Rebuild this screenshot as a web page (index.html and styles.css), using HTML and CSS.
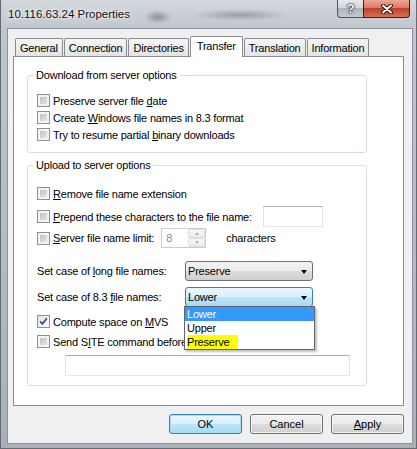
FILE: index.html
```html
<!DOCTYPE html>
<html lang="en">
<head>
    <meta charset="UTF-8">
    <meta name="viewport" content="width=device-width, initial-scale=1.0">
    <title>10.116.63.24 Properties</title>

    <link rel="stylesheet" href="styles.css">

</head>
<body>

    <div class="window">
        <div class="titlebar">
            <span class="caption">10.116.63.24 Properties</span>
            <div class="caption-buttons">
                <div class="cap-btn help"><span>?</span></div>
                <div class="cap-btn close">
                    <svg width="12" height="10" viewBox="0 0 12 10">
                        <path d="M2 1.5 L10 8.5 M10 1.5 L2 8.5" stroke="#3b1209" stroke-width="4" stroke-linecap="round"/>
                        <path d="M2 1.5 L10 8.5 M10 1.5 L2 8.5" stroke="#fff" stroke-width="2" stroke-linecap="round"/>
                    </svg>
                </div>
            </div>
        </div>

        <div class="client">
            <div class="tabs">
                <div class="tab">General</div>
                <div class="tab">Connection</div>
                <div class="tab">Directories</div>
                <div class="tab active">Transfer</div>
                <div class="tab">Translation</div>
                <div class="tab">Information</div>
            </div>

            <div class="panel">
                <fieldset class="group">
                    <legend>Download from server options</legend>
                    <label class="row"><span class="box"></span><span>Preserve server file <u>d</u>ate</span></label>
                    <label class="row"><span class="box"></span><span>Create <u>W</u>indows file names in 8.3 format</span></label>
                    <label class="row"><span class="box"></span><span>Try to resume partial <u>b</u>inary downloads</span></label>
                </fieldset>

                <fieldset class="group upload">
                    <legend>Upload to server options</legend>
                    <label class="row"><span class="box"></span><span><u>R</u>emove file name extension</span></label>
                    <div class="row prepend-row">
                        <label class="row"><span class="box"></span><span><u>P</u>repend these characters to the file name:</span></label>
                        <span class="textbox prefix-box"></span>
                    </div>
                    <div class="row limit-row">
                        <label class="row"><span class="box"></span><span><u>S</u>erver file name limit:</span></label>
                        <div class="spin">
                            <span class="spin-value">8</span>
                            <div class="spin-arrows">
                                <span class="spin-btn"><i class="tri up"></i></span>
                                <span class="spin-btn"><i class="tri down"></i></span>
                            </div>
                        </div>
                        <span class="units">characters</span>
                    </div>
                    <div class="row case-row long-case">
                        <span class="case-label">Set case of <u>l</u>ong file names:</span>
                        <div class="combo"><span>Preserve</span><i class="arrow"></i></div>
                    </div>
                    <div class="row case-row short-case">
                        <span class="case-label">Set case of 8.3 <u>f</u>ile names:</span>
                        <div class="combo open"><span>Lower</span><i class="arrow"></i>
                            <ul class="combo-list">
                                <li class="selected">Lower</li>
                                <li>Upper</li>
                                <li><span class="mark">Preserve</span></li>
                            </ul>
                        </div>
                    </div>
                    <label class="row compute-row">
                        <span class="box checked">
                            <svg width="11" height="11" viewBox="0 0 11 11">
                                <path d="M2.2 5.4 L4.4 7.8 L8.9 2.3" fill="none" stroke="#3a4f86" stroke-width="1.8"/>
                            </svg>
                        </span><span>Compute space on <u>M</u>VS</span>
                    </label>
                    <label class="row site-row"><span class="box"></span><span>Send S<u>I</u>TE command before</span></label>
                    <span class="textbox site-box"></span>
                </fieldset>
            </div>

            <div class="buttons">
                <button class="btn default">OK</button>
                <button class="btn">Cancel</button>
                <button class="btn"><u>A</u>pply</button>
            </div>
        </div>
    </div>

</body>
</html>
```

FILE: styles.css
```css
* {
box-sizing: border-box;
}

body {
margin: 0;
font-family: "Liberation Sans", Arial, sans-serif;
font-size: 11px;
letter-spacing: -0.2px;
color: #000;
}

/* aero frame */
.window {
width: 417px;
height: 449px;
display: flex;
flex-direction: column;
padding: 0 4px 5px 7px;
overflow: hidden;
background:
  radial-gradient(ellipse 14px 7px at 158px 17px, rgba(70, 74, 80, 0.45), transparent),
  radial-gradient(ellipse 50px 6px at 240px 15px, rgba(70, 74, 80, 0.35), transparent),
  linear-gradient(#d3d8dd, #bfc6cc 30px, #a9b0b7);
box-shadow: inset 1px 0 0 #656b72, inset -1px 0 0 #656b72, inset 0 -1px 0 #656b72;
}

.titlebar {
height: 28px;
display: flex;
align-items: flex-start;
padding-left: 1px;
}

.caption {
align-self: center;
font-size: 11.5px;
letter-spacing: 0;
color: #111;
text-shadow: 0 0 6px #fff, 0 0 3px #fff;
}

.caption-buttons {
display: flex;
margin-left: auto;
margin-right: 3px;
}

.cap-btn {
height: 18px;
display: flex;
align-items: center;
justify-content: center;
}

.help {
width: 26px;
border: 1px solid #4b5560;
border-top: 0;
border-right: 0;
border-radius: 0 0 0 4px;
background: linear-gradient(#e6eaee 0, #d0d6dc 45%, #aab3bc 50%, #c3cad1 100%);
}

.help span {
font-weight: bold;
font-size: 13px;
color: #f4f6f8;
text-shadow: 0 0 1px #27313b, 0 0 2px #27313b, 0 0 2px #27313b;
}

.close {
width: 47px;
border: 1px solid #4a1d14;
border-top: 0;
border-radius: 0 0 4px 0;
background: linear-gradient(#eaa898 0, #d97a63 45%, #c0412a 50%, #d4705a 100%);
}

/* client area */
.client {
flex: 1;
display: flex;
flex-direction: column;
background: #f0f0f0;
border: 1px solid #8a939b;
padding: 7px 8px 9px 5px;
}

.tabs {
display: flex;
align-items: flex-end;
height: 20px;
padding-left: 2px;
position: relative;
z-index: 1;
}

.tab {
height: 18px;
padding: 1px 4px 0;
line-height: 16px;
margin-right: 1px;
border: 1px solid #898c95;
border-bottom: 0;
border-radius: 2px 2px 0 0;
background: linear-gradient(#f5f5f5, #e4e4e4);
}

.tab.active {
height: 21px;
margin-bottom: -1px;
padding: 0 6px;
line-height: 18px;
background: #fff;
}

.panel {
flex: 1;
background: #fff;
border: 1px solid #898c95;
padding-left: 13px;
}

/* group boxes */
.group {
width: 340px;
min-width: 0;
margin: 11px 0 0;
padding: 10px 8px 9px 9px;
border: 1px solid #d5dfe5;
border-radius: 3px;
}

.group legend {
padding: 0 3px;
margin-left: -4px;
line-height: 14px;
}

.group.upload {
margin-top: 5px;
padding-top: 13px;
}

.row {
display: flex;
align-items: center;
height: 17px;
gap: 3px;
white-space: nowrap;
}

.box {
width: 13px;
height: 13px;
flex: none;
border: 1px solid #8e8f8f;
background: linear-gradient(135deg, #b3b8be, #eeeeee);
box-shadow: inset 0 0 0 2px #f4f4f4;
}

.box.checked {
background: linear-gradient(135deg, #e2e6ea, #fbfbfb);
box-shadow: none;
}

.box svg {
display: block;
}

.prepend-row {
height: 21px;
margin-top: 4px;
}

.limit-row {
height: 20px;
margin-top: 1px;
}

.textbox {
display: block;
height: 21px;
background: #fff;
border: 1px solid;
border-color: #abadb3 #dbdfe6 #e3e9ef #e2e3ea;
}

.prefix-box {
width: 60px;
margin-left: 8px;
}

.site-box {
width: 285px;
margin: 5px 0 0 28px;
}

.spin {
display: flex;
width: 45px;
height: 20px;
margin-left: 4px;
border: 1px solid #c9cbd0;
background: #fff;
}

.spin-value {
flex: 1;
padding-left: 4px;
line-height: 18px;
color: #8a8a8a;
}

.spin-arrows {
display: flex;
flex-direction: column;
width: 17px;
}

.spin-btn {
flex: 1;
display: flex;
align-items: center;
justify-content: center;
border: 1px solid #dadde2;
border-radius: 2px;
background: linear-gradient(#f8f8f8, #ebebeb);
}

.tri {
width: 0;
height: 0;
border-left: 2.5px solid transparent;
border-right: 2.5px solid transparent;
}

.tri.up {
border-bottom: 3px solid #b4b4b4;
}

.tri.down {
border-top: 3px solid #b4b4b4;
}

.units {
margin-left: 17px;
}

/* combo boxes */
.case-row {
height: 20px;
gap: 0;
}

.long-case {
margin-top: 13px;
}

.short-case {
margin-top: 6px;
}

.case-label {
width: 148px;
}

.combo {
position: relative;
display: flex;
align-items: center;
width: 128px;
height: 20px;
padding-left: 2px;
border: 1px solid #707070;
border-radius: 3px;
background: linear-gradient(#f2f2f2 0, #ebebeb 50%, #dddddd 50%, #cfcfcf 100%);
}

.combo.open {
border-color: #3c7fb1;
background: linear-gradient(#eaf6fd 0, #d9f0fc 50%, #bee6fd 50%, #a7d9f5 100%);
}

.arrow {
width: 0;
height: 0;
margin: 1px 5px 0 auto;
border-left: 3.5px solid transparent;
border-right: 3.5px solid transparent;
border-top: 4px solid #000;
}

.combo-list {
position: absolute;
top: 100%;
left: -2px;
z-index: 2;
width: 131px;
margin: 0;
padding: 0;
list-style: none;
background: #fff;
border: 1px solid #646464;
box-shadow: 2px 2px 2px rgba(0, 0, 0, 0.25);
}

.combo-list li {
height: 14px;
line-height: 14px;
padding-left: 2px;
}

.combo-list li.selected {
background: #3399ff;
color: #fff;
}

.mark {
display: inline-block;
padding-right: 9px;
background: #ffff00;
}

.compute-row {
margin-top: 6px;
}

.site-row {
margin-top: 3px;
}

/* dialog buttons */
.buttons {
display: flex;
justify-content: flex-end;
gap: 8px;
margin-top: 8px;
}

.btn {
width: 73px;
height: 20px;
padding: 0;
font: inherit;
color: #000;
border: 1px solid #707070;
border-radius: 3px;
background: linear-gradient(#f2f2f2 0, #ebebeb 50%, #dddddd 50%, #cfcfcf 100%);
box-shadow: inset 0 0 0 1px rgba(255, 255, 255, 0.7);
}

.btn.default {
border-color: #3c7fb1;
background: linear-gradient(#eaf6fd 0, #d9f0fc 50%, #bee6fd 50%, #a7d9f5 100%);
box-shadow: inset 0 0 0 1px #a9ddf6;
}
```
